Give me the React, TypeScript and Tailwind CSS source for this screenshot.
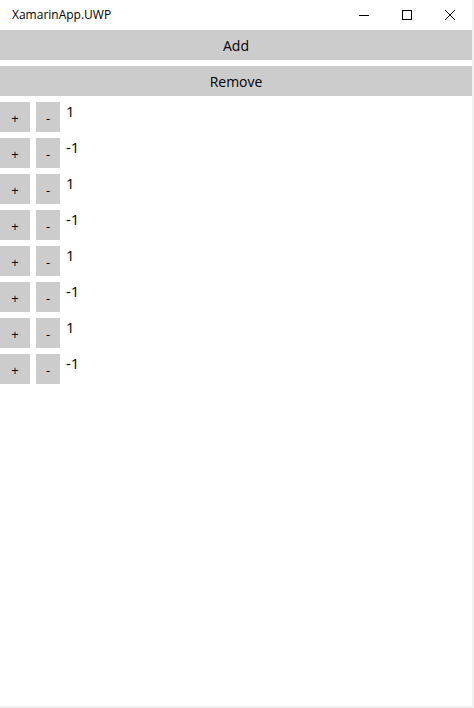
import { useState } from 'react';

const TitleBar = () => (
  <div className="h-[30px] flex items-center bg-white">
    <span className="pl-3 text-[12px] text-black">XamarinApp.UWP</span>
    <div className="ml-auto flex h-full">
      {/* minimize */}
      <div className="w-[43px] h-full flex items-center justify-center">
        <svg width="10" height="10" viewBox="0 0 10 10">
          <path d="M0 5.5h10" stroke="#000" strokeWidth="1" />
        </svg>
      </div>
      {/* maximize */}
      <div className="w-[43px] h-full flex items-center justify-center">
        <svg width="10" height="10" viewBox="0 0 10 10">
          <rect x="0.5" y="0.5" width="9" height="9" fill="none" stroke="#000" strokeWidth="1" />
        </svg>
      </div>
      {/* close */}
      <div className="w-[44px] h-full flex items-center justify-center">
        <svg width="10" height="10" viewBox="0 0 10 10">
          <path d="M0 0L10 10M10 0L0 10" stroke="#000" strokeWidth="1" />
        </svg>
      </div>
    </div>
  </div>
);

const App = () => {
  const [values, setValues] = useState([1, -1, 1, -1, 1, -1, 1, -1]);

  const change = (i: number, d: number) =>
    setValues(values.map((v, j) => (j === i ? v + d : v)));

  return (
    <div
      className="w-[474px] h-[708px] bg-white border-r-2 border-b-2 border-[#f0f0f0] overflow-hidden"
      style={{ fontFamily: '"Open Sans", "Noto Sans", sans-serif' }}
    >
      <TitleBar />
      <div className="flex flex-col gap-[6px]">
        <button
          className="h-[30px] w-full bg-[#cccccc] text-[14px] text-black"
          onClick={() => setValues([...values, values.length % 2 === 0 ? 1 : -1])}
        >
          Add
        </button>
        <button
          className="h-[30px] w-full bg-[#cccccc] text-[14px] text-black"
          onClick={() => setValues(values.slice(0, -1))}
        >
          Remove
        </button>
        <div className="flex flex-col gap-[6px]">
          {values.map((v, i) => (
            <div key={i} className="flex items-start h-[30px]">
              <button
                className="w-[30px] h-[30px] bg-[#cccccc] text-[13px] text-black leading-none pt-[3px]"
                onClick={() => change(i, 1)}
              >
                +
              </button>
              <button
                className="w-[24px] h-[30px] ml-[6px] bg-[#cccccc] text-[13px] text-black leading-none pt-[3px]"
                onClick={() => change(i, -1)}
              >
                -
              </button>
              <span className="ml-[6px] text-[15px] leading-none pt-[2px] text-black">{v}</span>
            </div>
          ))}
        </div>
      </div>
    </div>
  );
};

export default App;
